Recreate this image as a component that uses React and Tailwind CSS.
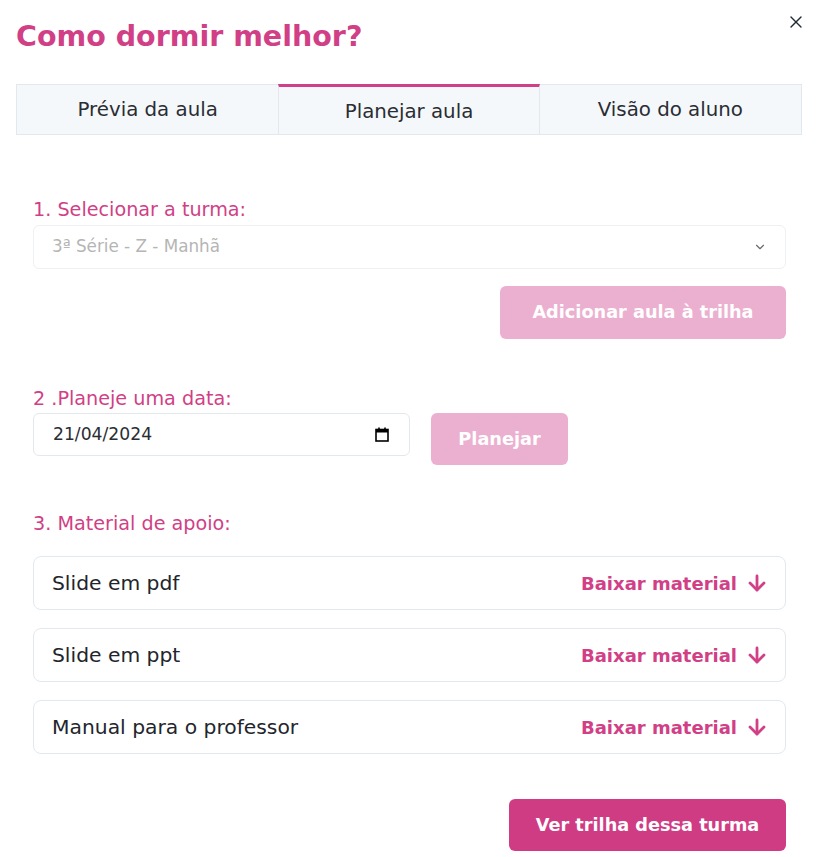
import { X, ChevronDown, ArrowDown } from 'lucide-react'

const MATERIALS = ['Slide em pdf', 'Slide em ppt', 'Manual para o professor']

const FONT = { fontFamily: '"DejaVu Sans", "Open Sans", sans-serif' }

export default function App() {
  return (
    <div className="relative w-[818px] h-[857px] bg-white" style={FONT}>
      {/* Header */}
      <button className="absolute right-[12px] top-[12px] text-[#1f2937]">
        <X size={20} strokeWidth={1.6} />
      </button>
      <h1 className="pl-4 pt-[18px] h-[84px] text-[28.5px] font-bold text-[#d13f86] leading-[38px]">
        Como dormir melhor?
      </h1>

      {/* Tabs */}
      <div className="mx-4 grid grid-cols-3 h-[51px] border border-[#e3e8ee] bg-[#f5f8fb] text-[19.8px] text-[#2a2d33]">
        <div className="flex items-center justify-center">Prévia da aula</div>
        <div className="flex items-center justify-center pt-[2px] border-x border-[#e3e8ee] border-t-[3px] border-t-[#d13f86] -mt-px">
          Planejar aula
        </div>
        <div className="flex items-center justify-center">Visão do aluno</div>
      </div>

      <div className="px-[33px] pr-[32px]">
        {/* Section 1 */}
        <p className="mt-[63px] text-[19.2px] text-[#d13f86] leading-[24px]">1. Selecionar a turma:</p>
        <div className="mt-[3px] h-[44px] flex items-center justify-between px-[18px] border border-[#eef0f3] rounded-[6px]">
          <span className="text-[16.8px] text-[#b5b5b5]">3ª Série - Z - Manhã</span>
          <ChevronDown size={14} className="text-[#6b6b6b]" />
        </div>
        <div className="flex justify-end mt-[17px]">
          <button className="h-[53px] w-[286px] rounded-[6px] bg-[#ebb0cf] text-white font-bold text-[17.7px]">
            Adicionar aula à trilha
          </button>
        </div>

        {/* Section 2 */}
        <p className="mt-[48px] text-[19.2px] text-[#d13f86] leading-[24px]">2 .Planeje uma data:</p>
        <div className="mt-[2px] flex gap-[21px] items-start">
          <div className="h-[43px] w-[377px] flex items-center justify-between pl-[19px] pr-[20px] border border-[#e3e8ee] rounded-[6px] bg-white">
            <span className="text-[17.2px] text-[#2a2d33]">21/04/2024</span>
            <svg width="14" height="15" viewBox="0 0 14 15" fill="none">
              <rect x="1" y="2.5" width="12" height="11.5" stroke="#000" strokeWidth="1.6" />
              <rect x="1" y="2.5" width="12" height="3" fill="#000" />
              <path d="M4 0.5v3M10 0.5v3" stroke="#000" strokeWidth="1.6" />
            </svg>
          </div>
          <button className="h-[52px] w-[137px] rounded-[6px] bg-[#ebb0cf] text-white font-bold text-[17.7px]">
            Planejar
          </button>
        </div>

        {/* Section 3 */}
        <p className="mt-[47px] text-[19.2px] text-[#d13f86] leading-[24px]">3. Material de apoio:</p>
        <div className="mt-[20px] flex flex-col gap-[18px]">
          {MATERIALS.map((m) => (
            <div
              key={m}
              className="h-[54px] flex items-center justify-between pl-[18px] pr-[16px] border border-[#e3e8ee] rounded-[8px]"
            >
              <span className="text-[20.3px] text-[#22252b]">{m}</span>
              <span className="flex items-center gap-[8px] text-[18px] font-bold text-[#d13f86]">
                Baixar material
                <ArrowDown size={24} strokeWidth={2.8} />
              </span>
            </div>
          ))}
        </div>

        <div className="flex justify-end mt-[45px]">
          <button className="h-[52px] w-[277px] rounded-[6px] bg-[#cf3c84] text-white font-bold text-[17.7px]">
            Ver trilha dessa turma
          </button>
        </div>
      </div>
    </div>
  )
}
